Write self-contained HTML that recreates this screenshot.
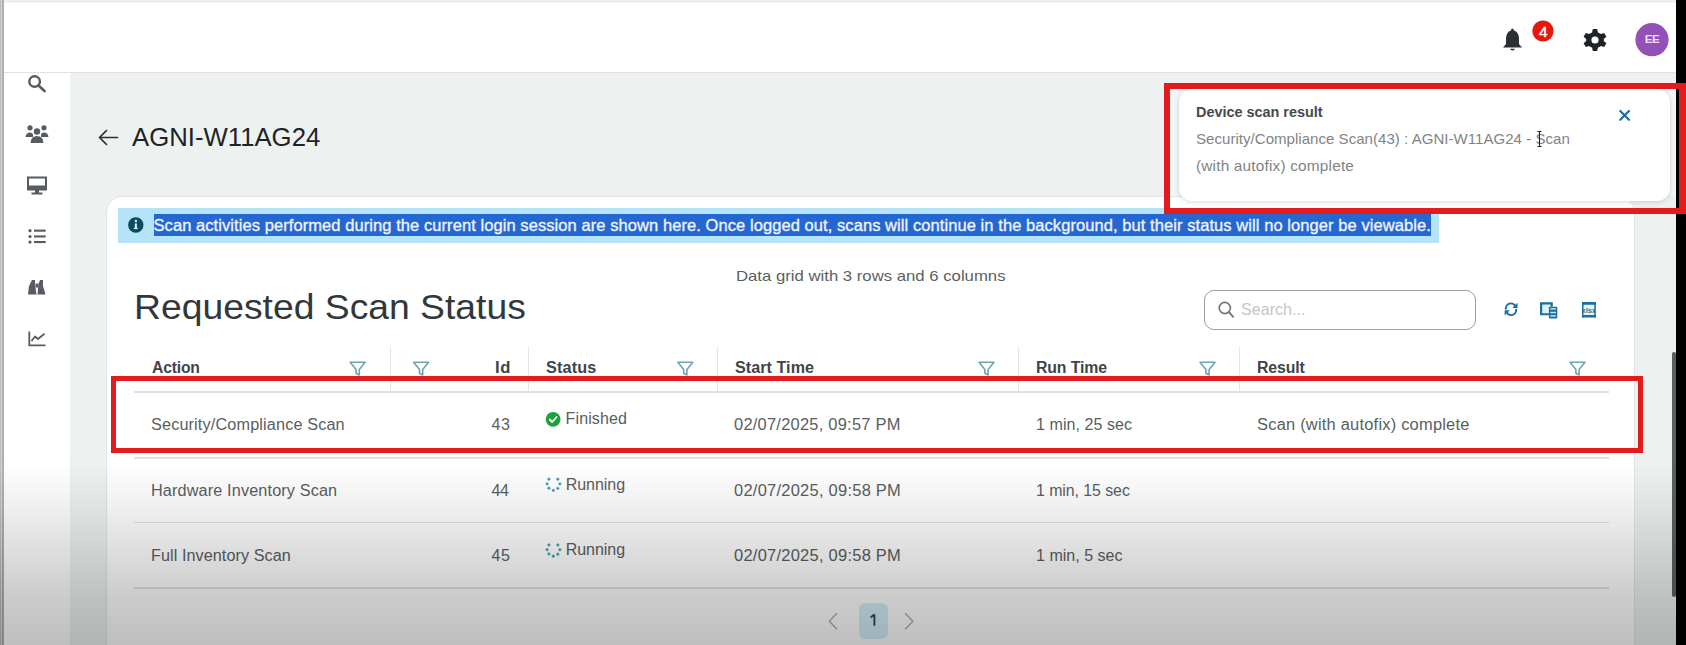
<!DOCTYPE html>
<html><head><meta charset="utf-8">
<style>
*{box-sizing:border-box;margin:0;padding:0}
html,body{width:1686px;height:645px;overflow:hidden;background:#fff;font-family:"Liberation Sans",sans-serif;position:relative}
.abs{position:absolute}
.tx{position:absolute;line-height:1;white-space:nowrap}
#leftline{left:0;top:0;width:4px;height:645px;background:linear-gradient(to right,#bcbcbc 0px,#bcbcbc 1.2px,#d6d6d6 1.5px,#d6d6d6 1.9px,#afafaf 2.2px,#afafaf 3.8px,#f2f2f2 4px)}
#topline{left:4px;top:0;width:1672px;height:2.5px;background:linear-gradient(to bottom,#f1f1ef 0,#f1f1ef 1px,#e7e7e5 1.5px,#f8f8f8 2.5px)}
#hdrline{left:4px;top:71.5px;width:1672px;height:1.5px;background:#e0e2e2}
#sidebar{left:4px;top:73px;width:66px;height:572px;background:#fff}
#main{left:70px;top:73px;width:1606px;height:572px;background:#edf2f1}
#black{left:1676px;top:0;width:10px;height:645px;background:#000}
#scroll{left:1672px;top:352px;width:4px;height:245px;background:#5b5f60;border-radius:2px}
#card{left:106px;top:196px;width:1528.5px;height:480px;background:#fff;border-radius:16px;border:1px solid #e2e5e5}
#infobar{left:118px;top:207.5px;width:1321px;height:35.5px;background:#b5e4f8}
#sel{left:154px;top:214px;width:1277px;height:22px;background:#2467d1}
#search{left:1204px;top:289.5px;width:272px;height:40.5px;border:1.8px solid #9c9d9e;border-radius:10px;background:#fff}
.vline{position:absolute;top:347px;width:1px;height:45px;background:#e3e4e5}
.hline{position:absolute;left:133.5px;width:1475px;height:1.5px;background:#dfe0e1}
#redbox1{left:111px;top:375.5px;width:1531.5px;height:77px;border:5.8px solid #e31b1d}
#redbox2{left:1164px;top:83px;width:524px;height:131px;border:6px solid #e31b1d;border-right-width:9px}
#toast{left:1178.5px;top:89px;width:491px;height:111.5px;background:#fff;border-radius:13px;box-shadow:0 1px 5px rgba(0,0,0,0.16)}
#pgbox{left:858.5px;top:603px;width:29px;height:36px;background:#d3f0f8;border-radius:6px}
#shade{left:0;top:0;width:1686px;height:645px;background:linear-gradient(to bottom,rgba(0,0,0,0) 0px,rgba(0,0,0,0) 462px,rgba(0,0,0,0.06) 505px,rgba(0,0,0,0.12) 545px,rgba(0,0,0,0.2) 595px,rgba(0,0,0,0.255) 645px);pointer-events:none}
svg{position:absolute;overflow:visible}
</style></head><body>
<div class="abs" id="topline"></div>
<div class="abs" id="leftline"></div>
<div class="abs" id="hdrline"></div>
<div class="abs" id="sidebar"></div>
<div class="abs" id="main"></div>
<div class="abs" id="card"></div>
<div class="abs" id="infobar"></div>
<div class="abs" id="sel"></div>
<div class="abs" id="search"></div>

<div class="vline" style="left:389.5px"></div>
<div class="vline" style="left:527.5px"></div>
<div class="vline" style="left:716.5px"></div>
<div class="vline" style="left:1017.5px"></div>
<div class="vline" style="left:1238.5px"></div>
<div class="hline" style="top:391px"></div>
<div class="hline" style="top:457px"></div>
<div class="hline" style="top:521.5px"></div>
<div class="hline" style="top:587px"></div>
<div class="abs" id="pgbox"></div>

<!-- ICONS -->
<svg width="1686" height="645" style="left:0;top:0">
  <!-- back arrow -->
  <g stroke="#2a2e31" stroke-width="1.7" fill="none" stroke-linecap="round" stroke-linejoin="round">
    <path d="M99.5 137.5 H117.5 M99.5 137.5 L106.5 130.5 M99.5 137.5 L106.5 144.5"/>
  </g>
  <!-- sidebar icons -->
  <g fill="#585c62" stroke="none">
    <circle cx="34.6" cy="81.5" r="5.3" fill="none" stroke="#585c62" stroke-width="2.4"/>
    <path d="M38.5 85.5 L44.5 91" stroke="#585c62" stroke-width="2.6" stroke-linecap="round"/>
    <!-- users -->
    <circle cx="30" cy="127.8" r="2.6"/><circle cx="44" cy="127.8" r="2.6"/><circle cx="37" cy="131.5" r="3.2"/>
    <path d="M25.5 137 Q26 132.5 30 132.5 Q33 132.5 33 135 L33 137 Z"/>
    <path d="M48.5 137 Q48 132.5 44 132.5 Q41 132.5 41 135 L41 137 Z"/>
    <path d="M30.5 143 Q31 136 37 136 Q43 136 43.5 143 Z"/>
    <!-- monitor -->
    <path d="M27 176.5 H47 V190.5 H39 V192.5 H42.5 V194.5 H31.5 V192.5 H35 V190.5 H27 Z M29 178.5 V185.5 H45 V178.5 Z" fill-rule="evenodd"/>
    <!-- list -->
    <circle cx="30" cy="230.7" r="1.6"/><circle cx="30" cy="236.5" r="1.6"/><circle cx="30" cy="242.1" r="1.6"/>
    <rect x="34" y="229.6" width="11.7" height="2.1"/><rect x="34" y="235.4" width="11.7" height="2.1"/><rect x="34" y="241" width="11.7" height="2.1"/>
    <!-- binoculars -->
    <path d="M32 280 H35 V284 L36.5 294.5 H28 L29 286 Z"/>
    <path d="M40 280 H43 V286 L45.5 294.5 H37.5 L38.5 284 Z"/>
    <rect x="35.6" y="283.5" width="2.8" height="4"/>
    <!-- chart -->
    <path d="M29.3 331.5 V345.3 H45.5" fill="none" stroke="#585c62" stroke-width="1.8"/>
    <path d="M31.5 341 L35 336.5 L38 339 L44.5 333.8" fill="none" stroke="#585c62" stroke-width="1.8" stroke-linejoin="round"/>
  </g>
  <!-- header icons -->
  <g fill="#2b3035">
    <path d="M1512.4 28.5 Q1513.8 28.5 1513.9 30.5 Q1519 32 1519 39 L1519 44 L1522 47.5 L1503 47.5 L1506 44 L1506 39 Q1506 32 1511 30.5 Q1511 28.5 1512.4 28.5 Z"/>
    <path d="M1510 48.7 H1515 Q1514.5 50.5 1512.5 50.5 Q1510.5 50.5 1510 48.7 Z"/>
  </g>
  <circle cx="1543" cy="31" r="10.6" fill="#e8170c"/>
  <text x="1543.3" y="36.6" font-family="Liberation Sans" font-size="15.5" fill="#fff" stroke="#fff" stroke-width="0.4" text-anchor="middle">4</text>
  <!-- gear -->
  <g transform="translate(1595,40)" fill="#1f2326">
    <path d="M-2.2 -11 H2.2 L2.9 -7.6 Q4.6 -7 5.9 -5.9 L9.2 -7 L11.4 -3.2 L8.8 -0.9 Q9 0 8.8 0.9 L11.4 3.2 L9.2 7 L5.9 5.9 Q4.6 7 2.9 7.6 L2.2 11 H-2.2 L-2.9 7.6 Q-4.6 7 -5.9 5.9 L-9.2 7 L-11.4 3.2 L-8.8 0.9 Q-9 0 -8.8 -0.9 L-11.4 -3.2 L-9.2 -7 L-5.9 -5.9 Q-4.6 -7 -2.9 -7.6 Z M0 -3.6 A3.6 3.6 0 1 0 0 3.6 A3.6 3.6 0 1 0 0 -3.6 Z" fill-rule="evenodd"/>
  </g>
  <circle cx="1652" cy="39.7" r="16.6" fill="#9350b7"/>
  <text x="1652" y="43.4" font-family="Liberation Sans" font-size="11.8" font-weight="bold" fill="#ecdff5" text-anchor="middle" letter-spacing="-0.6">EE</text>
  <!-- info icon -->
  <circle cx="135.8" cy="225" r="7.7" fill="#0b4a5f"/>
  <rect x="134.8" y="223.4" width="2.1" height="5.5" fill="#d8eef5"/>
  <rect x="133.8" y="227.9" width="4" height="1.2" fill="#d8eef5"/>
  <circle cx="135.9" cy="221" r="1.2" fill="#d8eef5"/>
  <!-- search icon -->
  <circle cx="1224.8" cy="308" r="5.6" fill="none" stroke="#76787a" stroke-width="1.7"/>
  <path d="M1228.8 312 L1233.2 316.8" stroke="#76787a" stroke-width="1.9" stroke-linecap="round"/>
  <!-- toolbar icons -->
  <g stroke="#1b6f9c" fill="none" stroke-width="2">
    <path d="M1506 309.5 A5 5 0 0 1 1515.5 306.5"/>
    <path d="M1516 309 A5 5 0 0 1 1506.5 312"/>
  </g>
  <path d="M1517.5 302.8 L1517.5 308 L1512.3 308 Z" fill="#1b6f9c"/>
  <path d="M1504.6 315.5 L1504.6 310.3 L1509.8 310.3 Z" fill="#1b6f9c"/>
  <rect x="1541.2" y="303.4" width="10.3" height="10.8" fill="#dcf3fa"/>
  <g fill="#1b6f9c">
    <path d="M1540 302.2 H1552.8 V306.8 H1550.6 V304.4 H1542.2 V313.3 H1548.9 V315.3 H1540 Z"/>
    <rect x="1548.9" y="306.8" width="8.4" height="11.7" rx="0.8"/>
  </g>
  <g fill="#cdeaf4"><rect x="1550.3" y="308.2" width="5.6" height="1.4"/><rect x="1550.3" y="311.8" width="5.6" height="1.4"/><rect x="1550.3" y="315.2" width="5.6" height="1.4"/></g>
  <rect x="1583" y="304" width="11.8" height="11.6" fill="#dcf3fa"/>
  <g fill="#1b6f9c">
    <rect x="1582" y="301.9" width="13.8" height="2.8" rx="0.5"/>
    <rect x="1582" y="315.1" width="13.8" height="2.5" rx="0.5"/>
    <rect x="1582" y="301.9" width="1.5" height="15.7"/>
    <rect x="1594.3" y="301.9" width="1.5" height="15.7"/>
  </g>
  <text x="1589" y="313" font-family="Liberation Sans" font-size="7.2" font-weight="bold" fill="#3b6d93" text-anchor="middle" letter-spacing="0.1">xlsx</text>
  <!-- filter icons -->
  <g fill="none" stroke="#6ea3b3" stroke-width="1.6" stroke-linejoin="round">
    <path d="M350.2 362.3 H365.2 L359.3 369.5 V375 L356.1 373.3 V369.5 Z"/>
    <path d="M413.6 362.3 H428.6 L422.7 369.5 V375 L419.5 373.3 V369.5 Z"/>
    <path d="M677.8 362.3 H692.8 L686.9 369.5 V375 L683.7 373.3 V369.5 Z"/>
    <path d="M979 362.3 H994 L988.1 369.5 V375 L984.9 373.3 V369.5 Z"/>
    <path d="M1200 362.3 H1215 L1209.1 369.5 V375 L1205.9 373.3 V369.5 Z"/>
    <path d="M1570 362.3 H1585 L1579.1 369.5 V375 L1575.9 373.3 V369.5 Z"/>
  </g>
  <!-- status icons -->
  <circle cx="553.1" cy="419.3" r="7.4" fill="#1aa33a"/>
  <path d="M549.7 419.5 L552.2 422 L556.6 417" fill="none" stroke="#fff" stroke-width="1.8" stroke-linecap="round" stroke-linejoin="round"/>
  <g fill="#3f8ea6" stroke="#a8dcef" stroke-width="0.8" stroke-opacity="0.6"><circle cx="548.9" cy="479.2" r="1.45"/><circle cx="557.8" cy="479.2" r="1.45"/><circle cx="547.1" cy="483.9" r="1.45"/><circle cx="559.9" cy="483.9" r="1.45"/><circle cx="548.9" cy="488.2" r="1.45"/><circle cx="553.3" cy="490.4" r="1.45"/><circle cx="557.8" cy="488.4" r="1.45"/></g>
  <g fill="#3f8ea6" stroke="#a8dcef" stroke-width="0.8" stroke-opacity="0.6"><circle cx="548.9" cy="545.0" r="1.45"/><circle cx="557.8" cy="545.0" r="1.45"/><circle cx="547.1" cy="549.7" r="1.45"/><circle cx="559.9" cy="549.7" r="1.45"/><circle cx="548.9" cy="554.0" r="1.45"/><circle cx="553.3" cy="556.2" r="1.45"/><circle cx="557.8" cy="554.2" r="1.45"/></g>
  <!-- pagination chevrons -->
  <path d="M837 613.2 L829.3 621.2 L837 629.2" fill="none" stroke="#a9acae" stroke-width="1.3"/>
  <path d="M905.2 613.2 L912.9 621.2 L905.2 629.2" fill="none" stroke="#a9acae" stroke-width="1.3"/>
  <path d="M874.4 614.6 V625.8 M874.4 614.6 L870.6 617.6" fill="none" stroke="#33454c" stroke-width="1.9" stroke-linejoin="round"/>
</svg>

<div class="abs" id="redbox1"></div>
<div class="abs" style="left:1170px;top:89px;width:507px;height:107px;background:#f3f6f6"></div>
<div class="abs" id="toast"></div>
<svg width="1686" height="645" style="left:0;top:0">
  <path d="M1620.3 111 L1629 119.7 M1629 111 L1620.3 119.7" stroke="#1c6d9a" stroke-width="2.2" stroke-linecap="round"/>
</svg>

<div class="tx" id="t_title" style="left:131.50px;top:123.99px;font-size:26px;font-weight:normal;color:#1e2326;transform:scaleX(0.9895);transform-origin:0 0;">AGNI-W11AG24</div>
<div class="tx" id="t_info" style="left:153.50px;top:216.83px;font-size:16.5px;font-weight:normal;color:#eef3ff;letter-spacing:0.072px;-webkit-text-stroke:0.35px #eef3ff;">Scan activities performed during the current login session are shown here. Once logged out, scans will continue in the background, but their status will no longer be viewable.</div>
<div class="tx" id="t_cap" style="left:736.39px;top:267.90px;font-size:15px;font-weight:normal;color:#5c5f61;transform:scaleX(1.1146);transform-origin:0 0;">Data grid with 3 rows and 6 columns</div>
<div class="tx" id="t_h2" style="left:133.76px;top:290.00px;font-size:34.5px;font-weight:normal;color:#31373b;transform:scaleX(1.0810);transform-origin:0 0;">Requested Scan Status</div>
<div class="tx" id="t_search" style="left:1240.50px;top:301.66px;font-size:16px;font-weight:normal;color:#c4c6c7;letter-spacing:0.031px;transform:scaleX(1.0040);transform-origin:0 0;">Search...</div>
<div class="tx" id="t_hA" style="left:152.30px;top:359.66px;font-size:16px;font-weight:bold;color:#404548;letter-spacing:-0.183px;transform:scaleX(0.9816);transform-origin:0 0;">Action</div>
<div class="tx" id="t_hI" style="left:494.96px;top:359.66px;font-size:16px;font-weight:bold;color:#404548;letter-spacing:0.480px;transform:scaleX(1.0417);transform-origin:0 0;">Id</div>
<div class="tx" id="t_hS" style="left:545.99px;top:359.66px;font-size:16px;font-weight:bold;color:#404548;letter-spacing:0.128px;transform:scaleX(1.0138);transform-origin:0 0;">Status</div>
<div class="tx" id="t_hST" style="left:735.19px;top:359.66px;font-size:16px;font-weight:bold;color:#404548;letter-spacing:0.055px;transform:scaleX(1.0065);transform-origin:0 0;">Start Time</div>
<div class="tx" id="t_hRT" style="left:1036.21px;top:359.66px;font-size:16px;font-weight:bold;color:#404548;letter-spacing:-0.116px;transform:scaleX(0.9887);transform-origin:0 0;">Run Time</div>
<div class="tx" id="t_hR" style="left:1256.81px;top:359.66px;font-size:16px;font-weight:bold;color:#404548;letter-spacing:-0.101px;transform:scaleX(0.9896);transform-origin:0 0;">Result</div>
<div class="tx" id="t_r1a" style="left:150.98px;top:417.26px;font-size:16px;font-weight:normal;color:#5a5e60;letter-spacing:0.128px;transform:scaleX(1.0161);transform-origin:0 0;">Security/Compliance Scan</div>
<div class="tx" id="t_r1i" style="left:491.50px;top:417.26px;font-size:16px;font-weight:normal;color:#5a5e60;letter-spacing:0.700px;">43</div>
<div class="tx" id="t_r1s" style="left:565.60px;top:411.46px;font-size:16px;font-weight:normal;color:#5a5e60;letter-spacing:0.114px;">Finished</div>
<div class="tx" id="t_r1t" style="left:734.47px;top:417.26px;font-size:16px;font-weight:normal;color:#5a5e60;letter-spacing:0.228px;transform:scaleX(1.0287);transform-origin:0 0;">02/07/2025, 09:57 PM</div>
<div class="tx" id="t_r1r" style="left:1035.80px;top:417.26px;font-size:16px;font-weight:normal;color:#5a5e60;letter-spacing:0.033px;transform:scaleX(1.0043);transform-origin:0 0;">1 min, 25 sec</div>
<div class="tx" id="t_r1x" style="left:1256.57px;top:417.26px;font-size:16px;font-weight:normal;color:#5a5e60;letter-spacing:0.205px;transform:scaleX(1.0286);transform-origin:0 0;">Scan (with autofix) complete</div>
<div class="tx" id="t_r2a" style="left:150.98px;top:482.66px;font-size:16px;font-weight:normal;color:#5a5e60;letter-spacing:0.125px;transform:scaleX(1.0156);transform-origin:0 0;">Hardware Inventory Scan</div>
<div class="tx" id="t_r2i" style="left:491.50px;top:482.66px;font-size:16px;font-weight:normal;color:#5a5e60;letter-spacing:-0.300px;">44</div>
<div class="tx" id="t_r2s" style="left:565.70px;top:476.76px;font-size:16px;font-weight:normal;color:#5a5e60;letter-spacing:-0.033px;">Running</div>
<div class="tx" id="t_r2t" style="left:734.47px;top:482.66px;font-size:16px;font-weight:normal;color:#5a5e60;letter-spacing:0.238px;transform:scaleX(1.0300);transform-origin:0 0;">02/07/2025, 09:58 PM</div>
<div class="tx" id="t_r2r" style="left:1035.81px;top:482.66px;font-size:16px;font-weight:normal;color:#5a5e60;letter-spacing:-0.055px;transform:scaleX(0.9931);transform-origin:0 0;">1 min, 15 sec</div>
<div class="tx" id="t_r3a" style="left:150.99px;top:548.46px;font-size:16px;font-weight:normal;color:#5a5e60;letter-spacing:0.077px;transform:scaleX(1.0104);transform-origin:0 0;">Full Inventory Scan</div>
<div class="tx" id="t_r3i" style="left:491.50px;top:548.46px;font-size:16px;font-weight:normal;color:#5a5e60;letter-spacing:0.700px;">45</div>
<div class="tx" id="t_r3s" style="left:565.70px;top:542.46px;font-size:16px;font-weight:normal;color:#5a5e60;letter-spacing:-0.033px;">Running</div>
<div class="tx" id="t_r3t" style="left:734.47px;top:548.46px;font-size:16px;font-weight:normal;color:#5a5e60;letter-spacing:0.238px;transform:scaleX(1.0300);transform-origin:0 0;">02/07/2025, 09:58 PM</div>
<div class="tx" id="t_r3r" style="left:1035.80px;top:548.46px;font-size:16px;font-weight:normal;color:#5a5e60;letter-spacing:0.009px;transform:scaleX(1.0012);transform-origin:0 0;">1 min, 5 sec</div>
<div class="tx" id="t_tt" style="left:1196.00px;top:104.73px;font-size:14.5px;font-weight:bold;color:#46494c;letter-spacing:-0.021px;transform:scaleX(0.9972);transform-origin:0 0;">Device scan result</div>
<div class="tx" id="t_t1" style="left:1196.00px;top:131.30px;font-size:15px;font-weight:normal;color:#818486;letter-spacing:0.023px;transform:scaleX(1.0031);transform-origin:0 0;">Security/Compliance Scan(43) : AGNI-W11AG24 - Scan</div>
<div class="tx" id="t_t2" style="left:1195.97px;top:158.10px;font-size:15px;font-weight:normal;color:#818486;letter-spacing:0.173px;transform:scaleX(1.0262);transform-origin:0 0;">(with autofix) complete</div>

<svg width="1686" height="645" style="left:0;top:0">
  <!-- I-beam cursor -->
  <path d="M1537.5 131.5 H1541.5 M1539.5 131.5 V146.5 M1537.5 146.5 H1541.5" stroke="#222" stroke-width="1.1" fill="none"/>
</svg>
<div class="abs" id="black"></div>
<div class="abs" id="redbox2"></div>
<div class="abs" id="scroll"></div>
<div class="abs" id="shade"></div>
</body></html>
